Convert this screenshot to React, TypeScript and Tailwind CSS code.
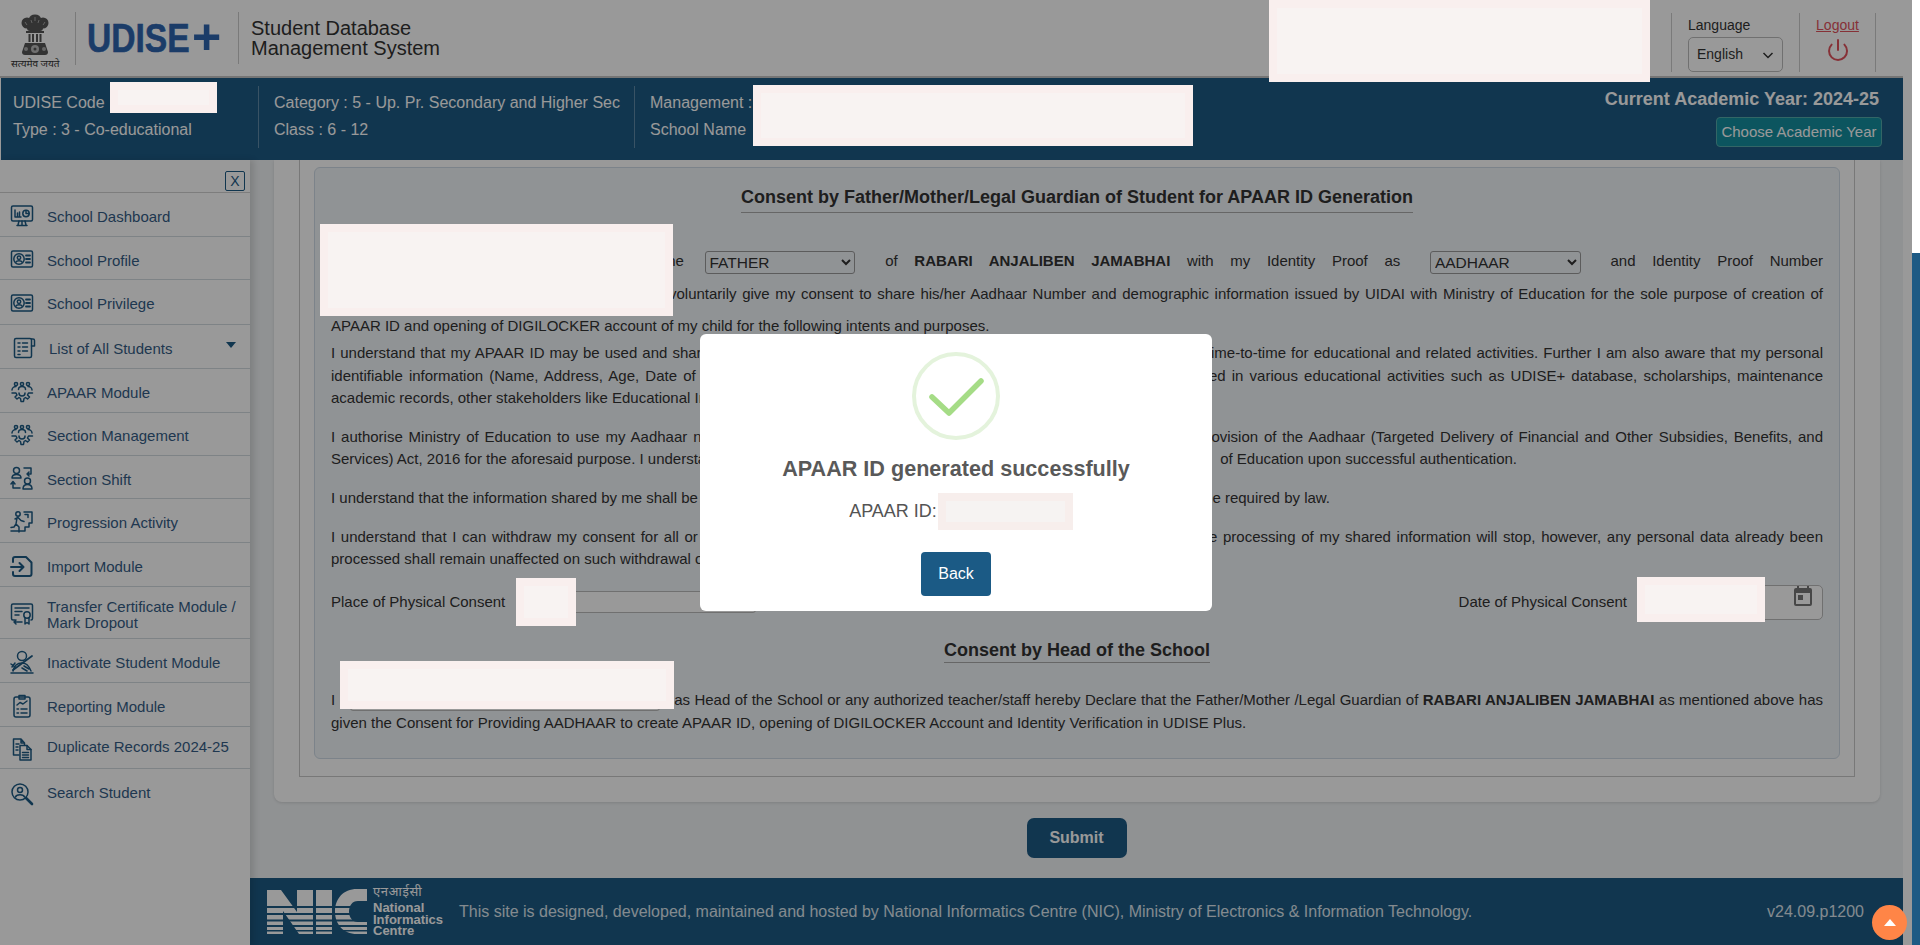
import React from "react";
import { Power } from "lucide-react";

const N = "#1d5a84";
const S = { fill: "none", stroke: N, strokeWidth: 1.5, strokeLinecap: "round" as const, strokeLinejoin: "round" as const };

function Ico({ children }: { children: React.ReactNode }) {
  return <svg viewBox="0 0 24 24" className="w-[24px] h-[24px] shrink-0 mt-[2px]" {...S}>{children}</svg>;
}

const Gears = () => (
  <Ico>
    <circle cx="6" cy="4" r="1.6" /><circle cx="12" cy="4" r="1.6" /><circle cx="18" cy="4" r="1.6" />
    <path d="M2 10c0-2 2-3.5 4-3.5M22 10c0-2-2-3.5-4-3.5M8.5 9.5c0-2 1.5-3 3.5-3s3.5 1 3.5 3" />
    <path d="M2 13h4l1 2-2 2 2 2 2-1.5 1.5 1 .5 3h2.5l.5-3 1.5-1 2 1.5 2-2-2-2 1-2h4" />
    <path d="M9 13a3 3 0 0 0 6 0" />
  </Ico>
);
const Card = () => (
  <Ico>
    <rect x="1.5" y="4" width="21" height="16" rx="1.5" />
    <circle cx="9" cy="12" r="5.2" /><circle cx="9" cy="10.8" r="1.7" /><path d="M6 15c.6-1.6 5.4-1.6 6 0" />
    <path d="M16 8.5h4M16 12h4M16 15.5h4" strokeWidth="1.8" />
  </Ico>
);
const icons: Record<string, React.ReactNode> = {
  dash: (
    <Ico>
      <rect x="1.5" y="2" width="21" height="15" rx="1.5" /><path d="M12 17v4M7 21.5h10M9 17l-1 4M15 17l1 4" />
      <path d="M5 6v7h6M7.5 12V9M9.5 12V8" /><circle cx="16" cy="9.5" r="3.2" /><path d="M16 6.5v3h3" />
    </Ico>
  ),
  card: <Card />,
  list: (
    <Ico>
      <path d="M18 21.5H4a1.500 1.500 0 0 1-1.500-1.500V4A1.500 1.500 0 0 1 4 2.500h14a1.500 1.500 0 0 1 1.500 1.500v16a1.500 1.500 0 0 1-1.500 1.500z" />
      <path d="M19.500 3h1.500a1.500 1.500 0 0 1 1.500 1.500V10h-3" />
      <path d="M6 7h2M10.500 7h5M6 11h2M10.500 11h5M6 15h2M10.500 15h5M6 18.500h2" />
    </Ico>
  ),
  gears: <Gears />,
  shift: (
    <Ico>
      <circle cx="6.500" cy="4.500" r="3" /><path d="M2 12c0-2.500 2-3.500 4.500-3.500S11 9.500 11 12z" />
      <circle cx="17.500" cy="15" r="3" /><path d="M13 23c0-3 2-4.500 4.500-4.500S22 20 22 23z" />
      <path d="M14 2h7v6h-4M19 6l-2 2 2 2" /><path d="M10 22H3v-6M1 18l2-2.500 2 2.500" />
    </Ico>
  ),
  prog: (
    <Ico>
      <circle cx="8" cy="4" r="2.200" /><path d="M5 9l3-1.500 3 3 3 1M7 8l-1 6 3 3v5M6 14l-2 3-3 .5" />
      <path d="M14 2h8v11h-3v4h-4v4H1" /><path d="M15 4.500l3 0v3" />
    </Ico>
  ),
  imp: (
    <Ico>
      <path d="M3 8V5a2 2 0 0 1 2-2h11l5.500 5.500V20a2 2 0 0 1-2 2H5a2 2 0 0 1-2-2v-2" strokeWidth="2" />
      <path d="M1 13h12M9.500 9l4 4-4 4" strokeWidth="2" />
    </Ico>
  ),
  tc: (
    <Ico>
      <path d="M5 18H3a1.500 1.500 0 0 1-1.500-1.500V3.500A1.500 1.500 0 0 1 3 2h18a1.500 1.500 0 0 1 1.500 1.500v13A1.500 1.500 0 0 1 21 18" />
      <path d="M5 6h14M5 9.500h7M5 13h4" /><circle cx="17" cy="13" r="3.200" />
      <path d="M15 16v6l2-1.500 2 1.500v-6M4 20h8M6 18l-2 2 2 2" />
    </Ico>
  ),
  inact: (
    <Ico>
      <circle cx="12" cy="6" r="4.500" /><path d="M3 21c1-5 4-8 9-8s7 3 9 8" /><path d="M22 6L3 20" strokeWidth="1.800" />
      <path d="M1 23h22M1 14l4 3M5 13l-3 4M14 16l5 3M12 18l5 3" />
    </Ico>
  ),
  rep: (
    <Ico>
      <rect x="4" y="3" width="16" height="20" rx="2" /><path d="M9 1.500h6v3.500H9z" />
      <path d="M7 11l3-2.500 3 1.500 4-3M7 15h1.500M11 15h6M7 19h1.500M11 19h6" />
    </Ico>
  ),
  dup: (
    <Ico>
      <path d="M9 18H3.500V2H11l3.500 4v2M11 2v4h3.500" /><path d="M10 8.500h7l4 4V23H10z" /><path d="M17 8.500v4h4M12.500 15.500h6M12.500 18h6M12.500 20.500h6" />
      <path d="M6 7h3M6 10h2M6 13h2" />
    </Ico>
  ),
  search: (
    <Ico>
      <circle cx="10" cy="10" r="8" /><circle cx="10" cy="8" r="2.500" /><path d="M5.500 15c.8-3 8.200-3 9 0" />
      <path d="M16 16l6 6" strokeWidth="2.600" />
    </Ico>
  ),
};

const rows: { t: string; i: string; h: string; x?: string; caret?: boolean; two?: boolean; p?: string; b?: string }[] = [
  { t: "School Dashboard", i: "dash", h: "h-[44px]" },
  { t: "School Profile", i: "card", h: "h-[43px]" },
  { t: "School Privilege", i: "card", h: "h-[45px]", p: "pt-[5px]" },
  { t: "List of All Students", i: "list", h: "h-[44px]", x: "pl-[12px] gap-[13px]", caret: true },
  { t: "APAAR Module", i: "gears", h: "h-[44px]" },
  { t: "Section Management", i: "gears", h: "h-[43px]", p: "pt-[5px]" },
  { t: "Section Shift", i: "shift", h: "h-[43px]" },
  { t: "Progression Activity", i: "prog", h: "h-[44px]" },
  { t: "Import Module", i: "imp", h: "h-[44px]" },
  { t: "Transfer Certificate Module / Mark Dropout", i: "tc", h: "h-[52px]", two: true, p: "pt-[4px]" },
  { t: "Inactivate Student Module", i: "inact", h: "h-[44px]" },
  { t: "Reporting Module", i: "rep", h: "h-[44px]" },
  { t: "Duplicate Records 2024-25", i: "dup", h: "h-[42px]", p: "pt-0" },
  { t: "Search Student", i: "search", h: "h-[48px]", p: "pt-0", b: "border-b-0" },
];

function Redact({ className }: { className: string }) {
  return (
    <div className={"absolute z-30 bg-[#f9efee] p-2 " + className}>
      <div className="w-full h-full bg-[#f8f3f2]" />
    </div>
  );
}

function Line({ className = "", children }: { className?: string; children: React.ReactNode }) {
  return <div className={"h-[22px] leading-[22px] whitespace-nowrap " + className}>{children}</div>;
}
function Split({ a, b, className = "" }: { a: string; b: string; className?: string }) {
  return (
    <Line className={"flex justify-between " + className}>
      <span>{a}</span>
      <span>{b}</span>
    </Line>
  );
}
const just = "whitespace-normal [text-align:justify] [text-align-last:justify]";

function Emblem() {
  const c = "#555";
  return (
    <svg viewBox="0 0 30 44" className="w-[30px] h-[44px] ml-[9px]">
      <g fill={c}>
        <ellipse cx="15" cy="5" rx="6" ry="4.500" />
        <ellipse cx="7" cy="9" rx="5.500" ry="5.500" />
        <ellipse cx="23" cy="9" rx="5.500" ry="5.500" />
        <rect x="7" y="8" width="16" height="9" rx="3" />
        <rect x="6" y="17" width="18" height="2" />
        <rect x="8.500" y="20" width="2" height="8" />
        <rect x="12" y="20" width="2" height="8" />
        <rect x="16" y="20" width="2" height="8" />
        <rect x="19.500" y="20" width="2" height="8" />
        <path d="M5 29h20l3 9a3 3 0 0 1-3 3H5a3 3 0 0 1-3-3z" />
      </g>
      <circle cx="15" cy="35" r="4" fill="#bbb" />
      <circle cx="15" cy="35" r="1.500" fill={c} />
      <circle cx="6" cy="35" r="2" fill="#aaa" />
      <circle cx="24" cy="35" r="2" fill="#aaa" />
      <path d="M11 6l1 3M15 3v4M19 6l-1 3M5 8l2 3M25 8l-2 3" stroke="#bbb" strokeWidth=".8" />
    </svg>
  );
}

function NicLogo() {
  const bg = "#1d5a84";
  return (
    <svg viewBox="0 0 100 45" className="w-[100px] h-[45px] shrink-0">
      <path d="M0 1h14l16 22V1h16v44H32L16 22v23H0z" fill="#fff" />
      <rect x="49" y="1" width="16" height="44" fill="#fff" />
      <path d="M100 0H90C76 0 68 10 68 22.500S76 45 90 45h10V33H91c-6 0-9-5-9-10.500S85 12 91 12h9z" fill="#fff" />
      <g fill={bg}>
        <rect y="17" width="100" height="2" />
        <rect y="24" width="100" height="2" />
        <rect y="30.500" width="100" height="2" />
        <rect y="36" width="100" height="2" />
        <rect y="41" width="100" height="1.500" />
      </g>
    </svg>
  );
}

export default function App() {
  return (
    <div className="relative flex h-[945px] w-[1920px] overflow-hidden bg-white font-['Liberation_Sans',Arial,sans-serif] text-[15px] text-[#333]">
      <div className="flex flex-col w-[1903px] shrink-0">
        {/* header */}
        <header className="flex items-center h-[78px] shrink-0 bg-white border-b-2 border-[#c4c4c4]">
          <div className="w-[75px] flex flex-col items-start pl-[11px] pt-[6px]">
            <Emblem />
            <span className="text-[10px] leading-[11px] text-[#333] font-['Noto_Sans','DejaVu_Sans',sans-serif] whitespace-nowrap">सत्यमेव जयते</span>
          </div>
          <div className="w-px h-[53px] bg-[#ccc]" />
          <div className="ml-[11px] w-[151px] flex items-center text-[#2e64ae] font-bold text-[40px] leading-none whitespace-nowrap">
            <span className="inline-block w-[105px] origin-left scale-x-[.84] [-webkit-text-stroke:0.6px_#2e64ae]">UDISE</span>
            <span className="text-[50px] leading-[40px] -mt-[3px]">+</span>
          </div>
          <div className="w-px h-[52px] bg-[#ccc]" />
          <div className="ml-[12px] text-[20px] leading-[20px] text-[#333]">
            Student Database<br />Management System
          </div>
          <div className="flex-1" />
          <div className="flex h-[59px] self-start mt-[13px]">
            <div className="border-l border-[#ccc] pl-[16px] w-[128px]">
              <div className="text-[14px] leading-[22px] pt-[1px] text-[#333]">Language</div>
              <div className="flex items-center justify-between w-[95px] h-[35px] px-[8px] mt-[1px] rounded-[5px] border border-[#bbb] text-[14px]">
                <span>English</span>
                <svg viewBox="0 0 12 12" className="w-[12px] h-[12px]" fill="none" stroke="#333" strokeWidth="1.5"><path d="M1.500 4l4.500 4.500L10.500 4" /></svg>
              </div>
            </div>
            <div className="border-x border-[#ccc] w-[77px] flex flex-col items-center">
              <a className="text-[14px] leading-[22px] pt-[1px] underline text-[#e0525c]">Logout</a>
              <Power className="mt-[2px] text-[#e0525c]" size={24} strokeWidth={2} />
            </div>
            <div className="w-[27px]" />
          </div>
        </header>

        {/* blue bar */}
        <div className="relative ml-px flex h-[82px] shrink-0 bg-[#1d5a84] text-white text-[16px] leading-[27px]">
          <div className="w-[257px] pl-[12px] pt-[11px]">
            <div>UDISE Code</div>
            <div>Type : 3 - Co-educational</div>
          </div>
          <div className="w-px h-[62px] mt-[8px] bg-[#5f8aa8]" />
          <div className="w-[375px] pl-[15px] pt-[11px] whitespace-nowrap">
            <div>Category : 5 - Up. Pr. Secondary and Higher Sec</div>
            <div>Class : 6 - 12</div>
          </div>
          <div className="w-px h-[62px] mt-[8px] bg-[#5f8aa8]" />
          <div className="pl-[15px] pt-[11px] whitespace-nowrap">
            <div>Management :</div>
            <div>School Name</div>
          </div>
          <div className="flex-1 flex flex-col items-end pr-[21px]">
            <div className="text-[18px] font-bold leading-[22px] mt-[10px] pr-[3px]">Current Academic Year: 2024-25</div>
            <button className="mt-[7px] h-[30px] w-[166px] rounded-[4px] border border-[#5aa] bg-[#148e9f] text-[15px] leading-[26px] text-white">Choose Academic Year</button>
          </div>
        </div>

        <div className="flex flex-1 min-h-0">
          {/* sidebar */}
          <aside className="w-[250px] shrink-0 bg-white shadow-[4px_0_6px_rgba(0,0,0,.12)] z-10">
            <div className="h-[33px] flex justify-end items-start pt-[11px] pr-[5px] border-b border-[#d0d0d0]">
              <span className="flex items-center justify-center w-[20px] h-[20px] border border-[#1d5a84] rounded-[2px] text-[14px] leading-none text-[#1d5a84]">X</span>
            </div>
            {rows.map((r) => (
              <div key={r.t} className={"flex items-center border-b border-[#d3dae0] text-[#355d85] " + r.h + " " + (r.b ?? "") + " " + (r.x ?? "pl-[10px] gap-[13px]")}>
                {icons[r.i]}
                <span className={(r.p ?? "pt-[6px]") + " " + (r.two ? "leading-[16px] w-[195px]" : "")}>{r.t}</span>
                {r.caret && (
                  <svg viewBox="0 0 10 6" className="w-[10px] h-[6px] ml-[41px] -mt-[4px]"><path d="M0 0h10L5 6z" fill={N} /></svg>
                )}
              </div>
            ))}
          </aside>

          {/* main */}
          <main className="flex-1 flex flex-col bg-[#f0f3f5] min-w-0">
            <div className="mx-[24px] w-[1606px] h-[642px] bg-white rounded-b-[8px] shadow-[0_1px_3px_rgba(0,0,0,.12)] px-[25px]">
              <div className="h-[617px] border-x border-b border-[#c9c9c9] px-[14px]">
                <div className="mt-0 pt-[7px] h-full">
                  <div className="h-[592px] rounded-[6px] border border-[#cfdbe6] bg-[#f1f5f9] px-[16px]">
                    <div className="text-center pt-[18px] h-[82px]">
                      <h2 className="inline-block text-[18px] leading-[22px] font-bold text-[#333] border-b border-[#aaa] pb-[4px]">
                        Consent by Father/Mother/Legal Guardian of Student for APAAR ID Generation
                      </h2>
                    </div>
                    <Line className={"pl-[332px] " + just}>
                      the{" "}
                      <select className="w-[150px] h-[23px] border border-[#999] rounded-[3px] bg-[#f1f5f9] text-[15.5px] ml-[4px] mr-[14px] align-middle" defaultValue="FATHER"><option>FATHER</option></select>
                      {" "}of <b>RABARI ANJALIBEN JAMABHAI</b> with my Identity Proof as{" "}
                      <select className="w-[151px] h-[23px] border border-[#999] rounded-[3px] bg-[#f1f5f9] text-[15.5px] ml-[13px] mr-[13px] align-middle" defaultValue="AADHAAR"><option>AADHAAR</option></select>
                      {" "}and Identity Proof Number
                    </Line>
                    <Line className={"mt-[11px] pl-[338px] " + just}>
                      voluntarily give my consent to share his/her Aadhaar Number and demographic information issued by UIDAI with Ministry of Education for the sole purpose of creation of
                    </Line>
                    <Line className="mt-[10px]">APAAR ID and opening of DIGILOCKER account of my child for the following intents and purposes.</Line>
                    <Split className="mt-[5px] [word-spacing:0.9px]" a="I understand that my APAAR ID may be used and shared" b="time-to-time for educational and related activities. Further I am also aware that my personal" />
                    <Split className="mt-[1px] [word-spacing:2px]" a="identifiable information (Name, Address, Age, Date of" b="used in various educational activities such as UDISE+ database, scholarships, maintenance" />
                    <Line>academic records, other stakeholders like Educational Institutions</Line>
                    <Split className="mt-[17px] [word-spacing:1.7px]" a="I authorise Ministry of Education to use my Aadhaar number" b="provision of the Aadhaar (Targeted Delivery of Financial and Other Subsidies, Benefits, and" />
                    <Split className="pr-[306px]" a="Services) Act, 2016 for the aforesaid purpose. I understand" b="of Education upon successful authentication." />
                    <Split className="mt-[17px] pr-[493px]" a="I understand that the information shared by me shall be" b="be required by law." />
                    <Split className="mt-[17px] [word-spacing:1.5px]" a="I understand that I can withdraw my consent for all or" b="the processing of my shared information will stop, however, any personal data already been" />
                    <Line>processed shall remain unaffected on such withdrawal of consent.</Line>

                    <Line className="mt-[21px] flex items-center justify-between">
                      <div className="flex items-center">
                        <span>Place of Physical Consent</span>
                        <span className="ml-[15px] w-[236px] h-[22px] bg-white border border-[#bbb] rounded-[3px]" />
                      </div>
                      <div className="flex items-center">
                        <span>Date of Physical Consent</span>
                        <span className="ml-[10px] w-[186px] h-[35px] bg-white border border-[#bbb] rounded-[5px] flex justify-end pr-[10px]">
                          <svg viewBox="0 0 18 20" className="w-[18px] h-[20px]" fill="#777">
                            <path d="M3 0h2v2h8V0h2v2h1a2 2 0 0 1 2 2v14a2 2 0 0 1-2 2H2a2 2 0 0 1-2-2V4a2 2 0 0 1 2-2h1zM2 7v11h14V7z" />
                            <rect x="4" y="9" width="5" height="5" />
                          </svg>
                        </span>
                      </div>
                    </Line>

                    <div className="text-center mt-[26px] h-[50px]">
                      <h2 className="inline-block text-[18px] leading-[22px] font-bold text-[#333] border-b border-[#aaa] pb-[1px]">Consent by Head of the School</h2>
                    </div>
                    <Line className="flex">
                      <span>I</span>
                      <span className="ml-[15px] w-[310px] h-[22px] bg-white border border-[#bbb] rounded-[3px]" />
                      <div className={"ml-[14px] flex-1 " + just}>
                        as Head of the School or any authorized teacher/staff hereby Declare that the Father/Mother /Legal Guardian of <b>RABARI ANJALIBEN JAMABHAI</b> as mentioned above has
                      </div>
                    </Line>
                    <Line className="mt-[1px]">given the Consent for Providing AADHAAR to create APAAR ID, opening of DIGILOCKER Account and Identity Verification in UDISE Plus.</Line>
                  </div>
                </div>
              </div>
            </div>
            <div className="flex justify-center mt-[16px]">
              <button className="w-[100px] h-[40px] rounded-[7px] bg-[#1d5a84] text-white font-bold text-[16px]">Submit</button>
            </div>
            <footer className="mt-auto h-[67px] flex items-center bg-[#1d5a84] pl-[17px] pr-[39px] text-[#dce6ee]">
              <NicLogo />
              <div className="ml-[6px] w-[86px] -mt-[2px] text-white font-bold text-[13px] leading-[11.5px]">
                <div className="font-normal text-[13px] tracking-[.6px] leading-[15px] mb-[3px] font-['Noto_Sans','DejaVu_Sans',sans-serif]">एनआईसी</div>
                National<br />Informatics<br />Centre
              </div>
              <span className="text-[16px] whitespace-nowrap">This site is designed, developed, maintained and hosted by National Informatics Centre (NIC), Ministry of Electronics &amp; Information Technology.</span>
              <span className="ml-auto text-[16px]">v24.09.p1200</span>
            </footer>
          </main>
        </div>
      </div>
      <div className="w-[9px] bg-white" />
      <div className="w-[8px] shrink-0 pt-[253px] bg-white relative z-20">
        <div className="h-full bg-[#1d5a84]" />
      </div>

      {/* dim layer with dialog */}
      <div className="absolute top-0 bottom-0 left-0 w-[1912px] z-20 bg-black/40 flex items-center justify-center">
        <div className="w-[512px] h-[277px] rounded-[6px] bg-white flex flex-col items-center pt-[18px]">
          <svg viewBox="0 0 88 88" className="w-[88px] h-[88px]" fill="none">
            <circle cx="44" cy="44" r="42" stroke="#e4f3dc" strokeWidth="4" />
            <path d="M20 45l17 16 32-32" stroke="#a5dc86" strokeWidth="5.500" strokeLinecap="round" strokeLinejoin="round" />
          </svg>
          <div className="mt-[16px] text-[21.6px] leading-[26px] font-bold text-[#595959] whitespace-nowrap">APAAR ID generated successfully</div>
          <div className="mt-[11px] ml-[10px] h-[37px] flex items-center text-[18px] text-[#545454]">
            APAAR ID:
            <span className="ml-[1px] w-[135px] h-[37px] bg-[#f7eeec] p-2"><span className="block w-full h-full bg-[#f6f3f2]" /></span>
          </div>
          <button className="mt-[22px] w-[70px] h-[44px] rounded-[4px] bg-[#1b5a85] text-white text-[16px]">Back</button>
        </div>
      </div>

      <Redact className="left-[1269px] top-0 w-[381px] h-[82px]" />
      <Redact className="left-[110px] top-[82px] w-[107px] h-[31px]" />
      <Redact className="left-[753px] top-[85px] w-[440px] h-[61px]" />
      <Redact className="left-[320px] top-[224px] w-[353px] h-[92px]" />
      <Redact className="left-[516px] top-[578px] w-[60px] h-[48px]" />
      <Redact className="left-[1637px] top-[577px] w-[128px] h-[45px]" />
      <Redact className="left-[340px] top-[661px] w-[334px] h-[48px]" />

      <button aria-label="Scroll to top" className="absolute z-30 left-[1872px] top-[905px] w-[35px] h-[35px] rounded-full bg-[#ff8547] flex items-center justify-center">
        <svg viewBox="0 0 12 7" className="w-[12px] h-[7px]"><path d="M6 0l6 7H0z" fill="#fff" /></svg>
      </button>
    </div>
  );
}
